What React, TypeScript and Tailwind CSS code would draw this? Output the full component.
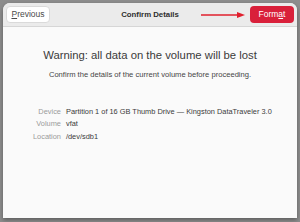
import React from 'react';

const font = { fontFamily: '"Liberation Sans", Arial, sans-serif' };

const details = [
  { label: 'Device', value: 'Partition 1 of 16 GB Thumb Drive — Kingston DataTraveler 3.0' },
  { label: 'Volume', value: 'vfat' },
  { label: 'Location', value: '/dev/sdb1' },
];

const App: React.FC = () => {
  return (
    <div className="w-[300px] h-[222px] bg-[#8d8d8d] pl-[3px] pr-[3px] pt-[3px] overflow-hidden" style={font}>
      <div className="w-[294px] h-[215px] flex flex-col rounded-t-[7px] overflow-hidden bg-[#fafafa] shadow-[0_2px_4px_rgba(0,0,0,0.35)]">
        {/* Header bar */}
        <header className="h-[24px] grid grid-cols-[1fr_auto_1fr] items-center px-[3px] bg-[#ebebeb] border-b border-[#d6d6d6]">
          <div className="flex">
            <button className="w-[44px] h-[17px] rounded-[4px] bg-white border border-[#dadada] text-[8.5px] text-[#4a4a4a] leading-none">
              <span className="underline underline-offset-1">P</span>revious
            </button>
          </div>
          <span className="text-center text-[7.8px] font-bold text-[#2e2e2e]">Confirm Details</span>
          <div className="flex items-center justify-end gap-[5px]">
            <svg width="44" height="6" viewBox="0 0 44 6">
              <line x1="0" y1="3" x2="38" y2="3" stroke="#e0202e" strokeWidth="1.3" />
              <path d="M36 0 L44 3 L36 6 Z" fill="#e0202e" />
            </svg>
            <button className="w-[44px] h-[17px] rounded-[4px] bg-[#d9203a] text-[8.5px] text-white leading-none">
              Form<span className="underline underline-offset-1">a</span>t
            </button>
          </div>
        </header>

        {/* Body */}
        <main className="flex-1 flex flex-col items-center pt-[23px]">
          <h1 className="text-[11.3px] text-[#3a3a3a] leading-none">Warning: all data on the volume will be lost</h1>
          <p className="mt-[10px] text-[7.6px] text-[#454545] leading-none">
            Confirm the details of the current volume before proceeding.
          </p>
          <div className="mt-[29px] self-start ml-[30px] grid grid-cols-[auto_1fr] gap-x-[5px] gap-y-[4px] text-[7.4px] leading-[8.5px]">
            {details.map((d) => (
              <React.Fragment key={d.label}>
                <span className="text-right text-[#9a9a9a]">{d.label}</span>
                <span className="text-[#3a3a3a]">{d.value}</span>
              </React.Fragment>
            ))}
          </div>
        </main>
      </div>
    </div>
  );
};

export default App;
